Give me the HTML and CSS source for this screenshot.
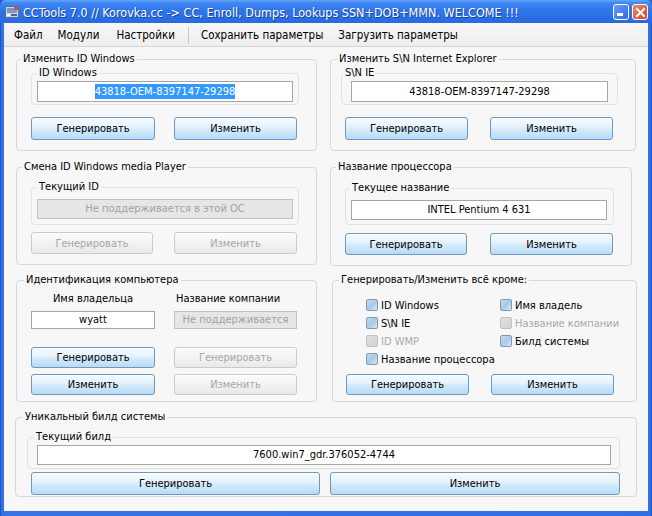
FILE: index.html
```html
<!DOCTYPE html>
<html lang="ru">
<head>
<meta charset="utf-8">
<title>CCTools 7.0</title>
<link rel="stylesheet" href="styles.css">
</head>
<body>
<div class="window">
  <div class="titlebar">
    <svg class="app-icon" width="14" height="12" viewBox="0 0 14 12">
      <rect x="0.5" y="0.5" width="13" height="11" fill="#c9d6ea" stroke="#5a6f96"/>
      <rect x="2" y="2" width="10" height="5" fill="#7d96c8"/>
      <rect x="9" y="1" width="4" height="3" fill="#e24a3a"/>
      <rect x="2" y="8" width="3" height="2" fill="#ffffff"/>
      <rect x="6" y="8" width="6" height="2" fill="#4a66a8"/>
    </svg>
    <span class="title">CCTools 7.0 // Korovka.cc -&gt; CC, Enroll, Dumps, Lookups SSN+DOB+MMN. WELCOME !!!</span>
    <span class="tb-btn tb-min"><span class="min-bar"></span></span>
    <span class="tb-btn tb-close">
      <svg width="11" height="11" viewBox="0 0 11 11"><path d="M2 2 L9 9 M9 2 L2 9" stroke="#fff" stroke-width="2" stroke-linecap="square"/></svg>
    </span>
  </div>
  <div class="frame">
    <div class="menubar">
      <span class="mi">Файл</span>
      <span class="mi mi-mod">Модули</span>
      <span class="mi mi-set">Настройки</span>
      <span class="msep"></span>
      <span class="mi">Сохранить параметры</span>
      <span class="mi">Загрузить параметры</span>
    </div>
    <div class="client">
      <div class="row row1">
        <fieldset class="grp g1">
          <legend>Изменить ID Windows</legend>
          <fieldset class="inner in1">
            <legend>ID Windows</legend>
            <div class="tb tb1"><span class="sel">43818-OEM-8397147-29298</span></div>
          </fieldset>
          <div class="btns b1">
            <span class="btn w124">Генерировать</span>
            <span class="btn w123">Изменить</span>
          </div>
        </fieldset>
        <fieldset class="grp g2">
          <legend>Изменить S\N Internet Explorer</legend>
          <fieldset class="inner in2">
            <legend>S\N IE</legend>
            <div class="tb tb2">43818-OEM-8397147-29298</div>
          </fieldset>
          <div class="btns b2">
            <span class="btn w123">Генерировать</span>
            <span class="btn w123">Изменить</span>
          </div>
        </fieldset>
      </div>

      <div class="row row2">
        <fieldset class="grp g3">
          <legend>Смена ID Windows media Player</legend>
          <fieldset class="inner in3">
            <legend>Текущий ID</legend>
            <div class="tb tb3 dis">Не поддерживается в этой ОС</div>
          </fieldset>
          <div class="btns b3">
            <span class="btn dis w122">Генерировать</span>
            <span class="btn dis w123">Изменить</span>
          </div>
        </fieldset>
        <fieldset class="grp g4">
          <legend>Название процессора</legend>
          <fieldset class="inner in4">
            <legend>Текущее название</legend>
            <div class="tb tb4">INTEL Pentium 4 631</div>
          </fieldset>
          <div class="btns b4">
            <span class="btn w122">Генерировать</span>
            <span class="btn w123">Изменить</span>
          </div>
        </fieldset>
      </div>

      <div class="row row3">
        <fieldset class="grp g5">
          <legend>Идентификация компьютера</legend>
          <div class="pair labels">
            <span class="lbl lbl1">Имя владельца</span>
            <span class="lbl lbl2">Название компании</span>
          </div>
          <div class="pair">
            <div class="tb tb5">wyatt</div>
            <div class="tb tb5 dis">Не поддерживается</div>
          </div>
          <div class="btns b5a">
            <span class="btn w124 h21">Генерировать</span>
            <span class="btn dis w123 h21">Генерировать</span>
          </div>
          <div class="btns b5b">
            <span class="btn w124 h21">Изменить</span>
            <span class="btn dis w123 h21">Изменить</span>
          </div>
        </fieldset>
        <fieldset class="grp g6">
          <legend>Генерировать/Изменить всё кроме:</legend>
          <div class="checks">
            <label class="chk"><span class="box"></span>ID Windows</label>
            <label class="chk"><span class="box"></span>Имя владель</label>
            <label class="chk"><span class="box"></span>S\N IE</label>
            <label class="chk dis"><span class="box"></span>Название компании</label>
            <label class="chk dis"><span class="box"></span>ID WMP</label>
            <label class="chk"><span class="box"></span>Билд системы</label>
            <label class="chk"><span class="box"></span>Название процессора</label>
          </div>
          <div class="btns b6">
            <span class="btn w123 h21">Генерировать</span>
            <span class="btn w123 h21">Изменить</span>
          </div>
        </fieldset>
      </div>

      <div class="row row4">
        <fieldset class="grp g7">
          <legend>Уникальный билд системы</legend>
          <fieldset class="inner in7">
            <legend>Текущий билд</legend>
            <div class="tb tb7">7600.win7_gdr.376052-4744</div>
          </fieldset>
          <div class="btns b7">
            <span class="btn w289">Генерировать</span>
            <span class="btn w290">Изменить</span>
          </div>
        </fieldset>
      </div>
    </div>
  </div>
</div>
</body>
</html>
```

FILE: styles.css
```css
* { box-sizing: border-box; }
html, body { margin: 0; padding: 0; }
body {
  width: 652px;
  height: 516px;
  overflow: hidden;
  font-family: "DejaVu Sans Condensed", "DejaVu Sans", sans-serif;
  font-size: 11px;
  color: #000;
}
.window {
  width: 652px;
  height: 516px;
  display: flex;
  flex-direction: column;
  background: linear-gradient(to right, #1c4fc4 0, #3574e6 2px, #2f6ee4 650px, #1c4fc4 652px);
}
.titlebar {
  height: 23px;
  flex: none;
  display: flex;
  align-items: center;
  padding: 1px 4px 0 5px;
  background: linear-gradient(to bottom, #6aa6fa 0%, #3f88f4 12%, #2f76ea 45%, #2a6ee4 80%, #2a6ade 100%);
  border-radius: 6px 6px 0 0;
}
.app-icon { flex: none; margin-right: 4px; }
.title {
  flex: 1;
  color: #fff;
  font-size: 12.5px;
  white-space: nowrap;
  text-shadow: 1px 1px 0 #1a3f9a;
}
.tb-btn {
  flex: none;
  width: 16px;
  height: 16px;
  border: 1px solid #fff;
  border-radius: 3px;
  display: flex;
  align-items: center;
  justify-content: center;
}
.tb-min {
  background: linear-gradient(135deg, #6aa0f8, #2f6ae0);
  margin-right: 3px;
  align-items: flex-end;
  justify-content: flex-start;
  padding: 0 0 3px 3px;
}
.min-bar { width: 6px; height: 3px; background: #fff; }
.tb-close { background: linear-gradient(135deg, #ea8a6c, #d8442a); }

.frame {
  flex: 1;
  margin: 0 4px 5px 4px;
  display: flex;
  flex-direction: column;
  background: #f7f7f7;
}
.menubar {
  height: 24px;
  flex: none;
  display: flex;
  align-items: center;
  padding: 1px 0 0 10px;
  background: linear-gradient(to bottom, #f7f7f7, #eeeeee);
  border-bottom: 1px solid #d6d6d6;
  font-size: 11.5px;
}
.mi { margin-right: 15px; white-space: nowrap; }
.mi-mod { margin-right: 17px; }
.mi-set { margin-right: 0; }
.msep {
  width: 1px;
  height: 17px;
  background: #c9c9c9;
  margin: 0 12px 0 13px;
}
.client {
  flex: 1;
  padding: 5px 0 0 12px;
  display: flex;
  flex-direction: column;
}
.row { display: flex; align-items: flex-start; }
.row2 { margin-top: 9px; }
.row3 { margin-top: 7px; }
.row4 { margin-top: 8px; }

fieldset {
  margin: 0;
  padding: 0;
  min-width: 0;
  border: 1px solid #d6d9dc;
  border-radius: 4px;
}
legend {
  padding: 0 2px;
  margin-left: 4px;
  line-height: 14px;
  font-size: 11px;
  white-space: nowrap;
}
.g1 { width: 301px; padding-bottom: 10px; }
.g2 { width: 306px; margin-left: 13px; padding-bottom: 10px; }
.g3 { width: 301px; padding-bottom: 10px; }
.g4 { width: 302px; margin-left: 13px; padding-bottom: 10px; }
.g5 { width: 301px; padding-bottom: 6px; }
.g6 { width: 305px; margin-left: 15px; padding-bottom: 6px; }
.g7 { width: 622px; margin-left: -1px; padding-bottom: 1px; }
.g2 > legend, .g6 > legend { margin-left: 6px; }
.g3 > legend, .g4 > legend { margin-left: 5px; }
.g5 > legend { margin-left: 7px; }
.g7 > legend { margin-left: 7px; }

.inner { border-color: #e0e2e4; }
.in1 { width: 268px; margin-left: 14px; padding: 0 0 2px 5px; }
.in2 { width: 277px; margin-left: 10px; padding: 0 0 2px 9px; }
.in3 { width: 268px; margin-left: 14px; margin-top: 6px; padding: 0 0 5px 5px; }
.in4 { width: 269px; margin-left: 14px; margin-top: 7px; padding: 0 0 4px 5px; }
.in7 { width: 593px; margin-left: 11px; margin-top: 6px; padding: 0 0 3px 9px; }
.in1 > legend, .in3 > legend { margin-left: 0; }
.in2 > legend { margin-left: -8px; }
.in4 > legend { margin-left: -1px; }
.in7 > legend { margin-left: -3px; }

.tb {
  height: 21px;
  border: 1px solid #a5a5a5;
  background: #fff;
  text-align: center;
  line-height: 19px;
  white-space: nowrap;
  overflow: hidden;
}
.tb.dis {
  background: #e6e6e6;
  border-color: #c2c2c2;
  color: #a2a2a2;
}
.tb1 { width: 256px; margin-top: 1px; }
.tb2 { width: 257px; margin-top: 1px; }
.tb3 { width: 256px; height: 20px; line-height: 18px; margin-top: 5px; }
.tb4 { width: 256px; height: 20px; line-height: 18px; margin-top: 5px; }
.tb7 { width: 574px; height: 20px; line-height: 18px; margin-top: 1px; }
.sel { background: #3399ff; color: #fff; padding: 1px 0; }

.btns { display: flex; }
.btn {
  display: flex;
  align-items: center;
  justify-content: center;
  height: 23px;
  border: 1px solid #6f98c0;
  border-radius: 3px;
  background: linear-gradient(to bottom, #f6fbff 0%, #e6f3fd 40%, #d0e8fa 60%, #b9dbf4 100%);
  box-shadow: inset 0 1px 0 #ffffff;
  white-space: nowrap;
  font-size: 11px;
}
.btn.dis {
  border-color: #cacaca;
  background: linear-gradient(to bottom, #fbfbfb 0%, #f1f1f1 60%, #e8e8e8 100%);
  color: #a6a6a6;
}
.h21 { height: 21px; }
.w122 { width: 122px; }
.w123 { width: 123px; }
.w124 { width: 124px; }
.w289 { width: 289px; }
.w290 { width: 290px; }
.b1 { margin: 12px 0 0 14px; gap: 19px; }
.b2 { margin: 12px 0 0 14px; gap: 22px; }
.b3 { margin: 7px 0 0 14px; gap: 21px; height: 22px; }
.b3 .btn, .b4 .btn { height: 22px; }
.b4 { margin: 8px 0 0 14px; gap: 23px; }
.b5a { margin: 18px 0 0 14px; gap: 19px; }
.b5b { margin: 6px 0 0 14px; gap: 19px; }
.b6 { margin: 6px 0 0 13px; gap: 22px; }
.b7 { margin: 3px 0 0 15px; gap: 10px; }

.pair { display: flex; margin-left: 14px; gap: 19px; }
.labels { margin-top: 5px; height: 14px; line-height: 14px; }
.lbl { white-space: nowrap; }
.lbl1 { width: 124px; text-align: center; }
.lbl2 { padding-left: 2px; }
.tb5 { width: 124px; height: 18px; line-height: 16px; margin-top: 5px; }
.tb5.dis { width: 123px; }

.checks {
  display: grid;
  grid-template-columns: 134px auto;
  grid-auto-rows: 18px;
  margin: 9px 0 0 33px;
}
.chk {
  display: flex;
  align-items: center;
  white-space: nowrap;
}
.box {
  width: 12px;
  height: 12px;
  margin-right: 3px;
  border: 1px solid #7c9ab8;
  border-radius: 2px;
  background: linear-gradient(135deg, #c7dcee 0%, #a9c9e6 50%, #d9e8f5 100%);
  flex: none;
}
.chk.dis { color: #a8a8a8; }
.chk.dis .box {
  border-color: #c2c2c2;
  background: linear-gradient(135deg, #e0e0e0, #d2d2d2);
}
```
